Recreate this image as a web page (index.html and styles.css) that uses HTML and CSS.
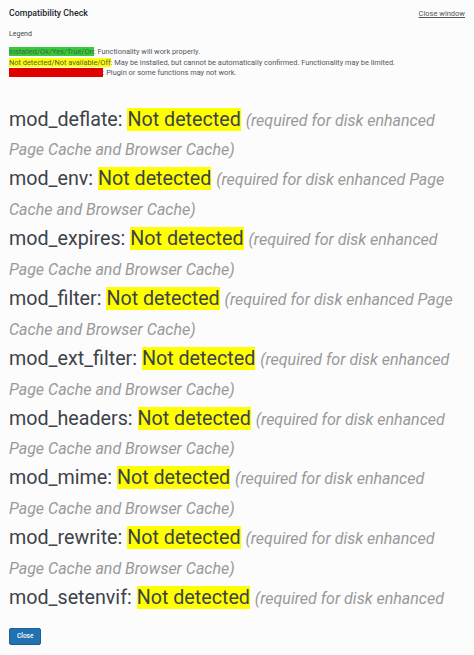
FILE: index.html
```html
<!DOCTYPE html>
<html lang="en">
<head>
    <meta charset="UTF-8">
    <meta name="viewport" content="width=device-width, initial-scale=1.0">
    <title>Compatibility Check</title>
    <link rel="stylesheet" href="styles.css">
</head>
<body>
    <div class="wrap">
        <div class="header">
            <h1>Compatibility Check</h1>
            <a href="#" class="close-link">Close window</a>
        </div>

        <!-- 圖例 -->
        <p class="legend-title">Legend</p>
        <ul class="legend">
            <li><span class="ok">Installed/Ok/Yes/True/On</span>: Functionality will work properly.</li>
            <li><span class="warn">Not detected/Not available/Off</span>: May be installed, but cannot be automatically confirmed. Functionality may be limited.</li>
            <li><span class="fail">Not installed/Error/No/False</span>: Plugin or some functions may not work.</li>
        </ul>

        <!-- 模組列表 -->
        <ul class="checks">
            <li>mod_deflate: <span class="warn">Not detected</span> <em>(required for disk enhanced Page Cache and Browser Cache)</em></li>
            <li>mod_env: <span class="warn">Not detected</span> <em>(required for disk enhanced Page Cache and Browser Cache)</em></li>
            <li>mod_expires: <span class="warn">Not detected</span> <em>(required for disk enhanced Page Cache and Browser Cache)</em></li>
            <li>mod_filter: <span class="warn">Not detected</span> <em>(required for disk enhanced Page Cache and Browser Cache)</em></li>
            <li>mod_ext_filter: <span class="warn">Not detected</span> <em>(required for disk enhanced Page Cache and Browser Cache)</em></li>
            <li>mod_headers: <span class="warn">Not detected</span> <em>(required for disk enhanced Page Cache and Browser Cache)</em></li>
            <li>mod_mime: <span class="warn">Not detected</span> <em>(required for disk enhanced Page Cache and Browser Cache)</em></li>
            <li>mod_rewrite: <span class="warn">Not detected</span> <em>(required for disk enhanced Page Cache and Browser Cache)</em></li>
            <li class="cut">mod_setenvif: <span class="warn">Not detected</span> <em>(required for disk enhanced Page Cache and Browser Cache)</em></li>
        </ul>

        <button class="btn">Close</button>
    </div>
</body>
</html>
```

FILE: styles.css
```css
/* 基本樣式 */
body {
    margin: 0;
    background-color: #fcfcfc;
    font-family: Roboto, "Liberation Sans", sans-serif;
    color: #3c434a;
}

.wrap {
    padding: 6px 9px 0 9px;
}

.header {
    display: flex;
    justify-content: space-between;
    align-items: center;
    height: 14px;
}

h1 {
    margin: 0;
    font-size: 8.8px;
    font-weight: 500;
    color: #23282d;
}

.close-link {
    font-size: 7.5px;
    color: #50575e;
}

.legend-title {
    margin: 10px 0 0 0;
    font-size: 7px;
}

.legend {
    list-style: none;
    margin: 9px 0 0 0;
    padding: 0;
    font-size: 7.4px;
    line-height: 10.5px;
    color: #50575e;
}

.ok {
    background-color: #33cc33;
}

.warn {
    background-color: #ffff00;
}

.fail {
    background-color: #e00000;
    color: #e00000;
}

/* 模組列表 */
.checks {
    list-style: none;
    margin: 26px 8px 0 0;
    padding: 0;
    font-size: 19.7px;
    line-height: 29.9px;
}

.checks em {
    font-size: 16px;
    line-height: 1;
    color: #999999;
}

.checks li.cut {
    height: 29.9px;
    overflow: hidden;
}

.btn {
    display: block;
    margin-top: 15px;
    padding: 0 7px;
    height: 17px;
    font-family: Roboto, sans-serif;
    font-size: 6.5px;
    font-weight: 500;
    color: #ffffff;
    background-color: #2271b1;
    border: 1px solid #1d5f96;
    border-radius: 2px;
}
```
